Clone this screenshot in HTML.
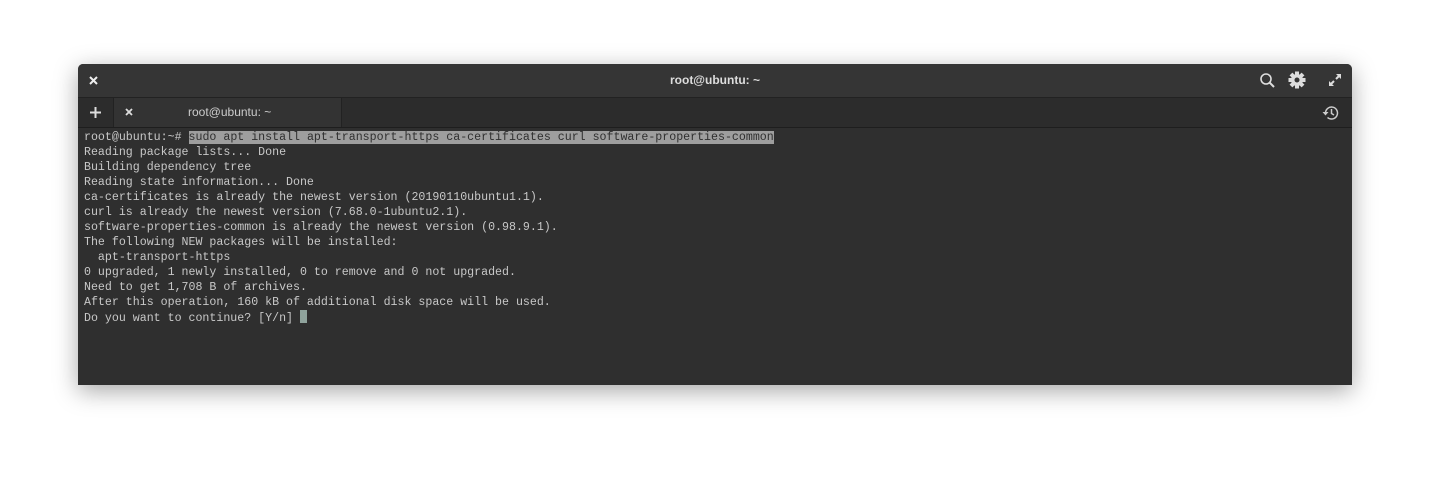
<!DOCTYPE html>
<html><head><meta charset="utf-8"><style>
body{margin:0;width:1430px;height:477px;background:#fff;position:relative;overflow:hidden;font-family:"Liberation Sans",sans-serif}
.win{position:absolute;left:78px;top:64px;width:1274px;height:321px;background:#2f2f2f;border-radius:5px 5px 0 0;box-shadow:0 6px 24px rgba(0,0,0,.35);overflow:hidden}
.title{position:absolute;left:0;top:0;width:100%;height:33px;background:#353535;border-bottom:1px solid #222}
.title .t{position:absolute;left:0;right:0;top:9px;text-align:center;color:#ddd;font-weight:bold;font-size:12px}
.tabs{position:absolute;left:0;top:34px;width:100%;height:29px;background:#2c2c2c;border-bottom:1px solid #1e1e1e}
.tab{position:absolute;left:35px;top:0;width:227px;height:29px;background:#333;border-left:1px solid #222;border-right:1px solid #222}
.tab span{position:absolute;left:74px;top:7px;color:#ccc;font-size:12px}
.term{position:absolute;left:6px;top:66px;font-family:"Liberation Mono",monospace;font-size:11.62px;line-height:15px;color:#c8c8c8;white-space:pre}
.sel{background:#9e9e9e;color:#2f2f2f}
.cur{display:inline-block;width:7px;height:13px;background:#8fa39c;vertical-align:-2px}
</style></head><body>
<div class="win">
<div class="title">
<svg style="position:absolute;left:11px;top:12px" width="9" height="9"><path d="M1 1L8 8M8 1L1 8" stroke="#eee" stroke-width="2"/></svg>
<div class="t">root@ubuntu: ~</div>
<svg style="position:absolute;left:1181px;top:8px" width="18" height="18"><circle cx="7" cy="7" r="5" stroke="#ddd" stroke-width="1.6" fill="none"/><path d="M10.5 10.5L15 15" stroke="#ddd" stroke-width="2"/></svg>
<svg style="position:absolute;left:1210px;top:7px" width="18" height="18" viewBox="0 0 18 18"><g fill="#ddd"><circle cx="9" cy="9" r="6"/><rect x="7" y="0.5" width="4" height="17"/><rect x="0.5" y="7" width="17" height="4"/><rect x="7" y="0.5" width="4" height="17" transform="rotate(45 9 9)"/><rect x="7" y="0.5" width="4" height="17" transform="rotate(-45 9 9)"/></g><circle cx="9" cy="9" r="2.5" fill="#353535"/></svg>
<svg style="position:absolute;left:1250px;top:9px" width="14" height="14"><path d="M8 1H13V6ZM1 8V13H6Z" fill="#ddd"/><path d="M12 2L8 6M2 12L6 8" stroke="#ddd" stroke-width="2"/></svg>
</div>
<div class="tabs">
<svg style="position:absolute;left:12px;top:9px" width="11" height="11"><path d="M5.5 0V11M0 5.5H11" stroke="#ddd" stroke-width="2"/></svg>
<div class="tab"><svg style="position:absolute;left:11px;top:10px" width="8" height="8"><path d="M1 1L7 7M7 1L1 7" stroke="#ddd" stroke-width="1.8"/></svg><span>root@ubuntu: ~</span></div>
<svg style="position:absolute;left:1244px;top:6px" width="18" height="18" viewBox="0 0 18 18"><path d="M3.5 9A6 6 0 1 1 5.5 13.5" stroke="#ccc" stroke-width="1.5" fill="none"/><path d="M0.5 8H6.5L3.5 11.5Z" fill="#ccc"/><path d="M9.5 5V9.5L12 11" stroke="#ccc" stroke-width="1.5" fill="none"/></svg>
</div>
<div class="term">root@ubuntu:~# <span class="sel">sudo apt install apt-transport-https ca-certificates curl software-properties-common</span>
Reading package lists... Done
Building dependency tree
Reading state information... Done
ca-certificates is already the newest version (20190110ubuntu1.1).
curl is already the newest version (7.68.0-1ubuntu2.1).
software-properties-common is already the newest version (0.98.9.1).
The following NEW packages will be installed:
  apt-transport-https
0 upgraded, 1 newly installed, 0 to remove and 0 not upgraded.
Need to get 1,708 B of archives.
After this operation, 160 kB of additional disk space will be used.
Do you want to continue? [Y/n] <span class="cur"></span></div>
</div>
</body></html>
